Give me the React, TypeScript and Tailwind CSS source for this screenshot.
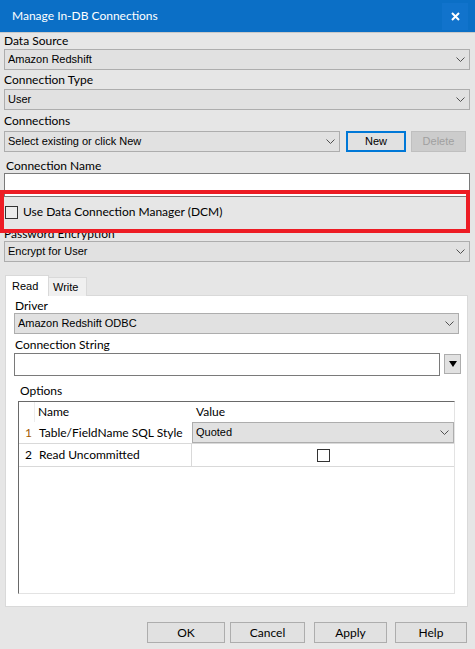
import React from "react";

const Chevron = () => (
  <svg width="9" height="5" viewBox="0 0 9 5" className="shrink-0">
    <polyline points="0.5,0.5 4.5,4.5 8.5,0.5" fill="none" stroke="#505050" strokeWidth="1" />
  </svg>
);

function Select({ text, className }: { text: string; className: string }) {
  return (
    <div
      className={`flex items-center h-[21px] border border-[#adadad] bg-[#e1e1e1] pl-[3px] pr-[4px] font-['Liberation_Sans',sans-serif] text-[11px] ${className}`}
    >
      <span className="flex-1 whitespace-nowrap overflow-hidden">{text}</span>
      <Chevron />
    </div>
  );
}

function Btn({ text, className }: { text: string; className: string }) {
  return (
    <div
      className={`flex items-center justify-center h-[21px] border border-[#adadad] bg-[#e1e1e1] ${className}`}
    >
      {text}
    </div>
  );
}

export default function App() {
  return (
    <div className="w-[475px] h-[649px] bg-[#e6e6e6] relative overflow-hidden font-['Lato',sans-serif] text-[12px] text-black">
      {/* Title bar */}
      <div className="h-[33px] bg-[#0b6fc6] flex items-center pl-[12px] text-white border-b border-[#c9c9c9]">
        <span className="text-[12px]">Manage In-DB Connections</span>
        <div className="ml-auto mr-[7px] w-[26px] h-[27px] bg-[#1173cc] flex items-center justify-center">
          <svg width="9" height="9" viewBox="0 0 9 9">
            <path d="M1 1 L8 8 M8 1 L1 8" stroke="white" strokeWidth="2" />
          </svg>
        </div>
      </div>

      {/* Upper form */}
      <div className="pl-[4px] w-[470px]">
        <div className="h-[16px] leading-[16px]">Data Source</div>
        <Select text="Amazon Redshift" className="w-[466px]" />
        <div className="h-[19px] leading-[16px] pt-[2px]">Connection Type</div>
        <Select text="User" className="w-[466px]" />
        <div className="h-[21px] leading-[16px] pt-[3px]">Connections</div>
        <div className="flex h-[21px]">
          <Select text="Select existing or click New" className="w-[336px]" />
          <div className="ml-[6px] w-[60px] h-[21px] border-2 border-[#0078d7] bg-[#e1e1e1] flex items-center justify-center font-['Liberation_Sans',sans-serif] text-[11px]">
            New
          </div>
          <div className="ml-[5px] w-[55px] h-[21px] border border-[#bfbfbf] bg-[#cccccc] flex items-center justify-center font-['Liberation_Sans',sans-serif] text-[11px] text-[#a0a0a0]">
            Delete
          </div>
        </div>
        <div className="h-[21px] leading-[16px] pt-[6px] pl-[2px]">Connection Name</div>
        <div className="h-[24px] w-[466px] bg-white border border-[#7a7a7a]" />
        <div className="h-[30px] flex items-center">
          <div className="ml-[1px] w-[13px] h-[13px] border border-[#333333] bg-[#ececec]" />
          <span className="ml-[5px]">Use Data Connection Manager (DCM)</span>
        </div>
        <div className="h-[14px] leading-[14px]">Password Encryption</div>
        <Select text="Encrypt for User" className="w-[466px]" />
      </div>

      {/* Tabs */}
      <div className="mt-[13px] ml-[5px] flex items-end h-[21px] font-['Liberation_Sans',sans-serif] text-[11px]">
        <div className="w-[44px] h-[21px] bg-white border border-b-0 border-[#d9d9d9] pl-[6px] flex items-center relative z-10">
          Read
        </div>
        <div className="w-[38px] h-[19px] bg-[#f0f0f0] border border-l-0 border-b-0 border-[#d9d9d9] pl-[4px] flex items-center">
          Write
        </div>
      </div>
      <div className="-mt-px ml-[5px] w-[463px] h-[312px] bg-white border border-[#d9d9d9]">
        <div className="pl-[9px] h-[17px] leading-[17px] pt-[1px]">Driver</div>
        <Select text="Amazon Redshift ODBC" className="ml-[8px] w-[445px]" />
        <div className="pl-[9px] h-[19px] leading-[16px] pt-[3px]">Connection String</div>
        <div className="flex ml-[8px] h-[23px]">
          <div className="w-[426px] h-[23px] bg-white border border-[#7a7a7a]" />
          <div className="ml-[4px] mt-[1px] w-[17px] h-[20px] bg-[#e1e1e1] border border-[#adadad] flex items-center justify-center">
            <svg width="8" height="6" viewBox="0 0 8 6">
              <polygon points="0,0 8,0 4,6" fill="black" />
            </svg>
          </div>
        </div>
        <div className="pl-[14px] h-[25px] leading-[15px] pt-[7px]">Options</div>

        {/* Grid */}
        <div className="ml-[12px] w-[437px] h-[193px] border-t border-l border-[#696969] border-r border-b border-r-[#e3e3e3] border-b-[#e3e3e3]">
          <div className="flex h-[20px]">
            <div className="w-[16px] border-r border-[#ececec]" />
            <div className="w-[157px] pl-[3px] flex items-center">Name</div>
            <div className="flex-1 pl-[4px] flex items-center">Value</div>
          </div>
          <div className="flex h-[22px] border-b border-[#d9d9d9]">
            <div className="w-[16px] flex items-center pl-[6px] text-[#a35a00]">1</div>
            <div className="w-[157px] pl-[4px] flex items-center">Table/FieldName SQL Style</div>
            <Select text="Quoted" className="flex-1" />
          </div>
          <div className="flex h-[23px] border-b border-[#d9d9d9]">
            <div className="w-[16px] flex items-center pl-[6px]">2</div>
            <div className="w-[157px] pl-[4px] flex items-center border-r border-[#d9d9d9]">Read Uncommitted</div>
            <div className="flex-1 flex items-center justify-center">
              <div className="w-[13px] h-[13px] border border-[#333333] bg-white" />
            </div>
          </div>
        </div>
      </div>

      {/* Buttons */}
      <div className="mt-[15px] flex h-[21px]">
        <Btn text="OK" className="ml-[147px] w-[78px]" />
        <Btn text="Cancel" className="ml-[5px] w-[75px]" />
        <Btn text="Apply" className="ml-[9px] w-[73px]" />
        <Btn text="Help" className="ml-[8px] w-[72px]" />
      </div>

      {/* Red annotation box */}
      <div className="absolute top-[190px] left-0 w-[470px] h-[43px] border-4 border-[#ed1c24] z-20" />
    </div>
  );
}
